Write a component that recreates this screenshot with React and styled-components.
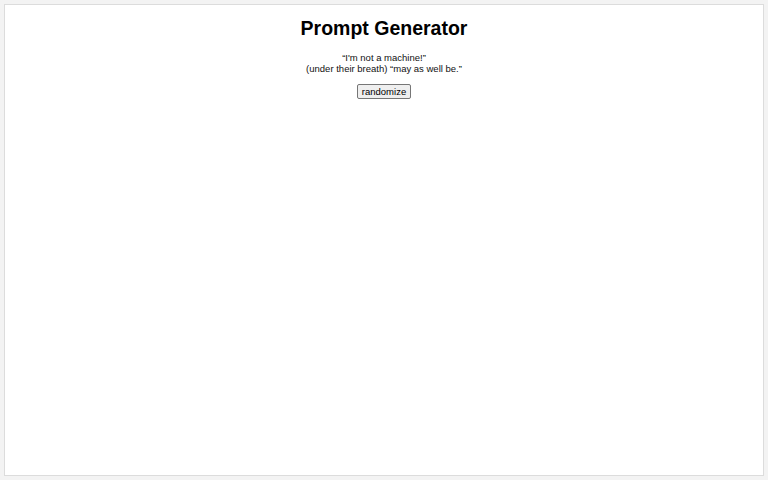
import styled, { createGlobalStyle } from "styled-components";

const GlobalStyle = createGlobalStyle`
  html, body {
    margin: 0;
    padding: 0;
    background: #f3f3f3;
    font-family: "Liberation Sans", Arial, sans-serif;
  }
`;

const Page = styled.div`
  box-sizing: border-box;
  height: 480px;
  padding: 4px;
`;

const Panel = styled.main`
  box-sizing: border-box;
  height: 100%;
  background: #fff;
  border: 1px solid #dcdcdc;
  display: flex;
  flex-direction: column;
  align-items: center;
  padding-top: 12px;
`;

const Title = styled.h1`
  margin: 0 0 13px;
  font-size: 19.5px;
  font-weight: bold;
  color: #000;
  line-height: 22px;
`;

const Quote = styled.p`
  margin: 0;
  font-size: 9.5px;
  line-height: 11px;
  text-align: center;
  color: #111;
`;

const Button = styled.button`
  margin-top: 10px;
  font-family: inherit;
  font-size: 9.5px;
  padding: 1px 4px;
  line-height: 11px;
  background: #efefef;
  border: 1px solid #767676;
  border-radius: 2px;
  color: #000;
`;

export default function App() {
  return (
    <>
      <GlobalStyle />
      <Page>
        <Panel>
          <Title>Prompt Generator</Title>
          <Quote>
            “I'm not a machine!”
            <br />
            (under their breath) “may as well be.”
          </Quote>
          <Button>randomize</Button>
        </Panel>
      </Page>
    </>
  );
}
